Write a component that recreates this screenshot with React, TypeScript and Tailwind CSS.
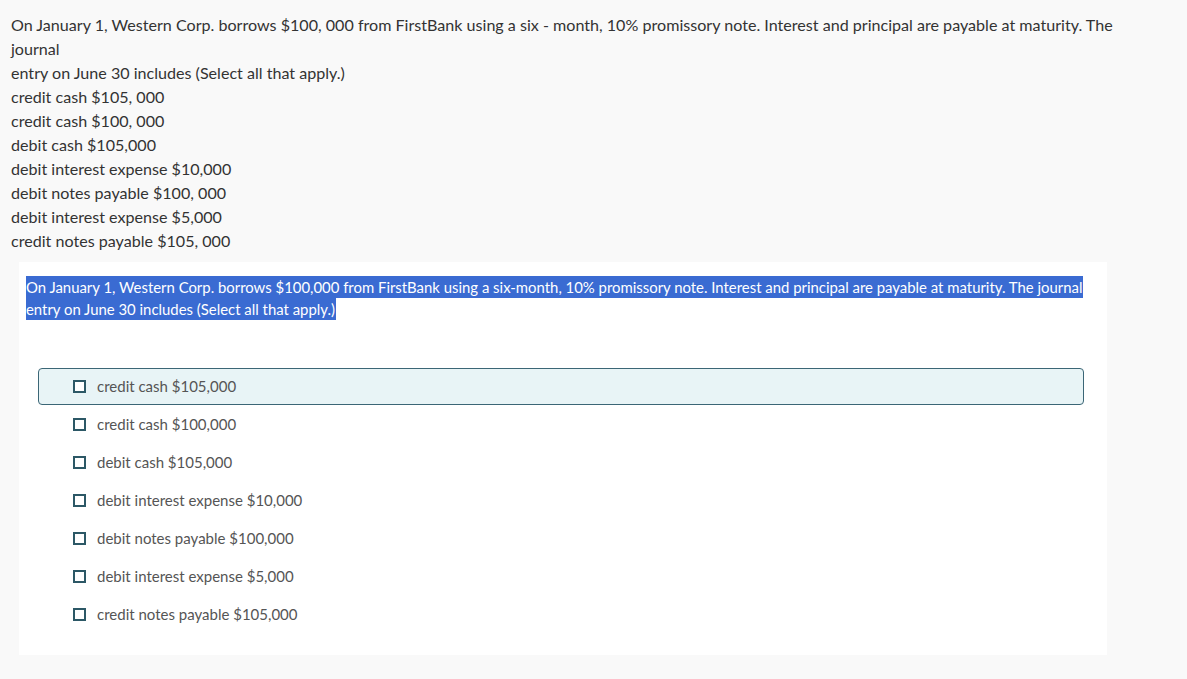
const topLines = [
  'On January 1, Western Corp. borrows $100, 000 from FirstBank using a six - month, 10% promissory note. Interest and principal are payable at maturity. The',
  'journal',
  'entry on June 30 includes (Select all that apply.)',
  'credit cash $105, 000',
  'credit cash $100, 000',
  'debit cash $105,000',
  'debit interest expense $10,000',
  'debit notes payable $100, 000',
  'debit interest expense $5,000',
  'credit notes payable $105, 000',
];

const options = [
  'credit cash $105,000',
  'credit cash $100,000',
  'debit cash $105,000',
  'debit interest expense $10,000',
  'debit notes payable $100,000',
  'debit interest expense $5,000',
  'credit notes payable $105,000',
];

function Checkbox() {
  return <span className="block w-[13px] h-[13px] border-2 border-[#2c5866] bg-white shrink-0" />;
}

export default function App() {
  return (
    <div className="min-h-screen bg-[#f9f9f9] pt-[13px] px-[11px] font-['Lato',sans-serif]">
      {/* pasted question text */}
      <div className="text-[16.1px] leading-[24px] text-[#333]">
        {topLines.map((l, i) => (
          <div key={i}>{l}</div>
        ))}
      </div>

      {/* question panel */}
      <div className="mt-[9px] ml-[8px] w-[1088px] h-[393px] bg-white pt-[14px] pl-[7px]">
        <div className="text-[14.9px] leading-[22px] text-white">
          <div className="w-fit bg-[#3a6bd2] pr-px">
            On January 1, Western Corp. borrows $100,000 from FirstBank using a six-month, 10% promissory note. Interest and principal are payable at maturity. The journal
          </div>
          <div className="w-fit bg-[#3a6bd2] pr-px">entry on June 30 includes (Select all that apply.)</div>
        </div>

        <div className="mt-[48px] ml-[12px] w-[1046px] flex flex-col">
          {options.map((o, i) => (
            <div
              key={o}
              className={
                i === 0
                  ? 'h-[37px] flex items-center gap-[11px] pl-[34px] rounded-[4px] border border-[#3b6676] bg-[#e8f4f6]'
                  : 'h-[38px] flex items-center gap-[11px] pl-[35px]'
              }
            >
              <Checkbox />
              <span className="text-[15px] text-[#555]">{o}</span>
            </div>
          ))}
        </div>
      </div>
    </div>
  );
}
